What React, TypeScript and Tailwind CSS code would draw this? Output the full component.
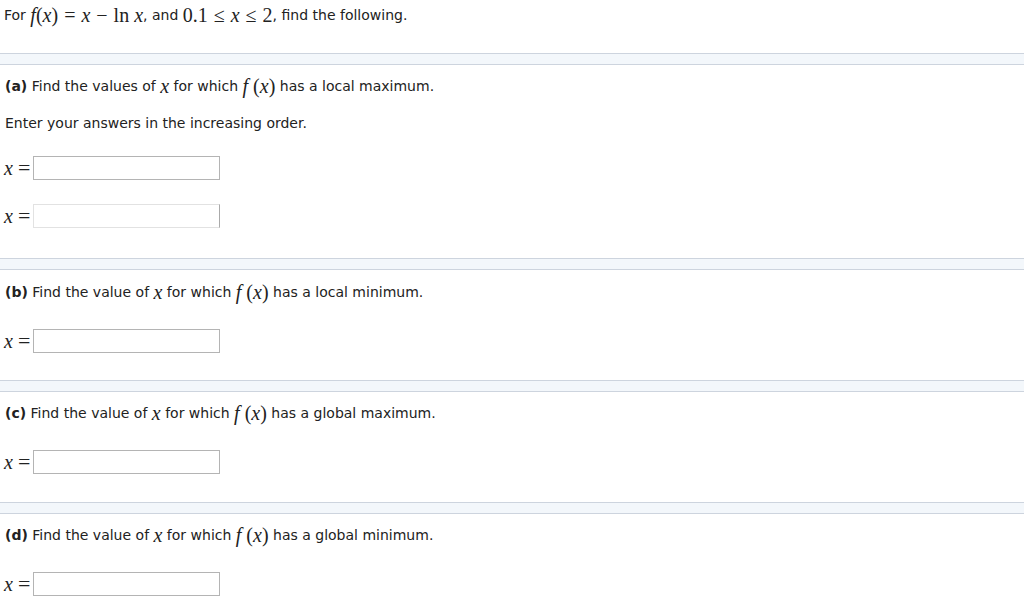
const serif = "font-['Liberation_Serif','Times_New_Roman',serif]"

function V({ children }: { children: string }) {
  return <span className="italic">{children}</span>
}

function Fx({ gap = false }: { gap?: boolean }) {
  return (
    <span className={`${serif} text-[20px] leading-none`}>
      <V>f</V>
      {gap ? <span className="inline-block w-[5px]" /> : null}(<V>x</V>)
    </span>
  )
}

function X() {
  return (
    <span className={`${serif} text-[20px] leading-none`}>
      <V>x</V>
    </span>
  )
}

function Op({ children }: { children: string }) {
  return <span className="mx-[6px]">{children}</span>
}

function Separator() {
  return <div className="h-[12px] border-y border-[#cdd4de] bg-[#f3f7fb]" />
}

function AnswerRow({ light = false }: { light?: boolean }) {
  return (
    <div className="flex items-center h-[24px] pl-[4px]">
      <span className={`${serif} text-[20px] leading-none text-[#222] w-[29px] whitespace-nowrap flex items-center`}>
        <V>x</V>
        <span className="ml-[5px] text-[22px]">=</span>
      </span>
      <input
        type="text"
        className={`w-[187px] h-[24px] bg-white outline-none border ${
          light ? 'border-[#e2e2e2] border-r-[#aaaaaa]' : 'border-[#b4b4b4]'
        }`}
      />
    </div>
  )
}

function Question({ label, text, kind }: { label: string; text: string; kind: string }) {
  return (
    <div className="h-[20px] flex items-center pl-[5px] whitespace-nowrap">
      <b className="font-bold">({label})</b>
      <span>&nbsp;Find the {text} of&nbsp;</span>
      <X />
      <span>&nbsp;for which&nbsp;</span>
      <Fx gap />
      <span>&nbsp;has a {kind}.</span>
    </div>
  )
}

export default function App() {
  return (
    <div className="w-[1024px] h-[599px] overflow-hidden bg-white text-[#222] text-[14px] font-['DejaVu_Sans','Verdana',sans-serif]">
      {/* Intro */}
      <div className="h-[53px] pt-[5px]">
        <div className="h-[20px] flex items-center pl-[4px] whitespace-nowrap">
          <span>For&nbsp;</span>
          <Fx />
          <span className={`${serif} text-[20px] leading-none`}>
            <Op>=</Op>
            <V>x</V>
            <Op>−</Op>ln <V>x</V>
          </span>
          <span>, and&nbsp;</span>
          <span className={`${serif} text-[20px] leading-none`}>
            0.1<Op>≤</Op>
            <V>x</V>
            <Op>≤</Op>2
          </span>
          <span>, find the following.</span>
        </div>
      </div>
      <Separator />

      {/* (a) */}
      <div className="pt-[11px] h-[193px]">
        <Question label="a" text="values" kind="local maximum" />
        <div className="h-[20px] flex items-center pl-[5px] mt-[17px]">
          Enter your answers in the increasing order.
        </div>
        <div className="mt-[23px]">
          <AnswerRow />
        </div>
        <div className="mt-[24px]">
          <AnswerRow light />
        </div>
      </div>
      <Separator />

      {/* (b) */}
      <div className="pt-[12px] h-[110px]">
        <Question label="b" text="value" kind="local minimum" />
        <div className="mt-[27px]">
          <AnswerRow />
        </div>
      </div>
      <Separator />

      {/* (c) */}
      <div className="pt-[11px] h-[110px]">
        <Question label="c" text="value" kind="global maximum" />
        <div className="mt-[27px]">
          <AnswerRow />
        </div>
      </div>
      <Separator />

      {/* (d) */}
      <div className="pt-[11px]">
        <Question label="d" text="value" kind="global minimum" />
        <div className="mt-[27px]">
          <AnswerRow />
        </div>
      </div>
    </div>
  )
}
